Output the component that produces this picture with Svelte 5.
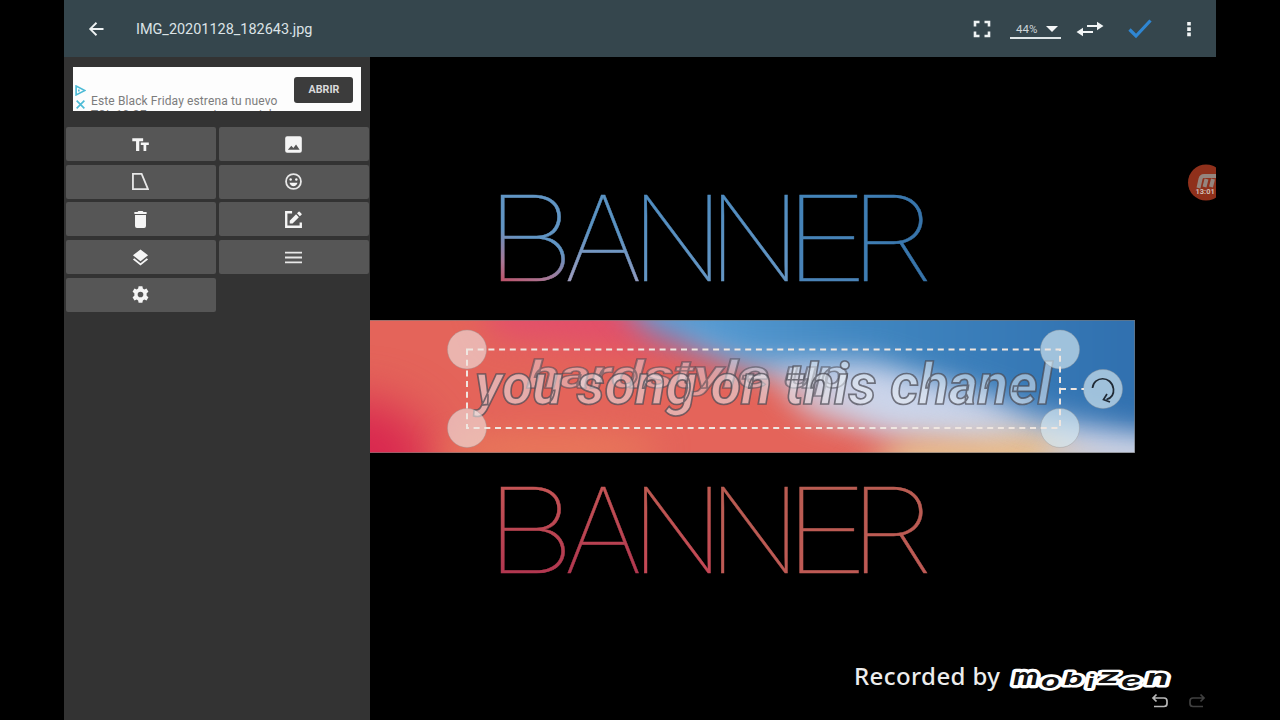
<script>
  const tools = ['text', 'image', 'shape', 'emoji', 'trash', 'edit', 'layers', 'menu', 'gear'];
  const letters = [
    { c: 'B', x: 485, w: 1.2, cool: 'cool-b', warm: 'warm-a' },
    { c: 'A', x: 563.8, w: 1.045, cool: 'cool-a', warm: 'warm-a' },
    { c: 'N', x: 630.6, w: 1.03, cool: 'cool-n', warm: 'warm-n' },
    { c: 'N', x: 707.6, w: 1.03, cool: 'cool-n', warm: 'warm-e' },
    { c: 'E', x: 783, w: 1.25, cool: 'cool-e', warm: 'warm-e' },
    { c: 'R', x: 848.6, w: 1.17, cool: 'cool-r', warm: 'warm-e' }
  ];
  const rows = [{ y: 281, tone: 'cool' }, { y: 573, tone: 'warm' }];
  const logo = [
    { c: 'm', x: 1013, y: 685, s: 23, w: 1.2 },
    { c: 'o', x: 1041, y: 688, s: 19, w: 1.6 },
    { c: 'b', x: 1064, y: 685, s: 18, w: 1.65 },
    { c: 'i', x: 1087, y: 688, s: 18, w: 1.4 },
    { c: 'z', x: 1098, y: 683, s: 20, w: 1.9 },
    { c: 'e', x: 1121, y: 688, s: 19, w: 1.8 },
    { c: 'n', x: 1146, y: 685, s: 22, w: 1.65 }
  ];
</script>

<main class="screen">
  <div class="device">
    <header>
      <svg class="back" viewBox="0 0 24 24"><path d="M21 10.800H7.800l5.600-5.400L11.800 3.600l-8.300 8.400 8.300 8.400 1.600-1.800-5.600-5.400H21z" /></svg>
      <h1>IMG_20201128_182643.jpg</h1>
      <svg class="full" viewBox="0 0 18 18"><path d="M2 6.500V2h4.500M11.500 2H16v4.500M16 11.500V16h-4.500M6.500 16H2v-4.500" /></svg>
      <div class="zoom"><span>44%</span><i></i></div>
      <svg class="swap" viewBox="0 0 28 16"><path d="M11 4h10V.8l6.500 4.200L21 9.200V6H11zM17 10H7V6.800L.5 11 7 15.200V12h10z" /></svg>
      <svg class="check" viewBox="0 0 24 20"><path d="M1.500 10.500l6.500 6.500L22.500 1.500" /></svg>
      <svg class="more" viewBox="0 0 4 16"><path d="M.2 1h3.600v3.600H.2zM.2 6.300h3.600v3.600H.2zM.2 11.600h3.600v3.600H.2z" /></svg>
    </header>

    <div class="body">
      <aside>
        <div class="ad">
          <div class="marks">
            <svg viewBox="0 0 10 10"><path d="M1 1l8 4-8 4zM3.500 4v2" /></svg>
            <svg viewBox="0 0 10 10"><path d="M1.500 1.500l7 7M8.500 1.500l-7 7" /></svg>
          </div>
          <p>Este Black Friday estrena tu nuevo<br />TCL 10 SE con un precio especial</p>
          <button>ABRIR</button>
        </div>
        <div class="tools">
          {#each tools as t}
            <button class="tool" aria-label={t}>
              <svg viewBox="0 0 18 18">
                {#if t === 'text'}
                  <path d="M.3 2.300h11.500v3.200H7.700v10.300H4.300V5.500h-4zM9.300 6.800h8.500v2.800h-2.700v6.200h-2.900V9.600H9.300z" />
                {:else if t === 'image'}
                  <path fill-rule="evenodd" d="M2.300.2h13.400a2.100 2.100 0 0 1 2.100 2.100v13.400a2.100 2.100 0 0 1-2.100 2.100H2.300a2.100 2.100 0 0 1-2.100-2.100V2.300A2.100 2.100 0 0 1 2.300.2zM3 14.500h12.500l-3.800-5.500-2.800 3.800-2.200-2.600z" />
                {:else if t === 'shape'}
                  <path class="line" d="M1 1h9.200l6.700 16H1z" />
                {:else if t === 'emoji'}
                  <circle class="line" cx="9" cy="9" r="7.900" />
                  <circle cx="6" cy="6.800" r="1.300" /><circle cx="12" cy="6.800" r="1.300" />
                  <path d="M4.800 10.400h8.400c-.6 2.400-2.200 3.600-4.200 3.600s-3.600-1.200-4.200-3.600z" />
                {:else if t === 'trash'}
                  <path d="M2.500 1h3.300l1-1h4.400l1 1h3.300v2.200h-13zM3.200 4.200h11.600V16a2 2 0 0 1-2 2H5.200a2 2 0 0 1-2-2z" />
                {:else if t === 'edit'}
                  <path class="thick" d="M7.500 1.300H1.300v15.400h15.400v-4.500" />
                  <path d="M5 10.200v3h3l6.700-6.700-3-3zM12.700 2.500l1.700-1.700a.8.800 0 0 1 1.100 0l2 2a.8.800 0 0 1 0 1.100l-1.800 1.600z" />
                {:else if t === 'layers'}
                  <path d="M9 .5l8 6.200-8 6.300-8-6.300zM9 15l6.600-5.100 1.400 1.100-8 6.500-8-6.500 1.400-1.100z" />
                {:else if t === 'menu'}
                  <path class="line" d="M0 3.800h18M0 9h18M0 14.200h18" />
                {:else}
                  <path fill-rule="evenodd" d="M7 .2h4l.5 2.500 1.500.9 2.400-.9 2 3.400-1.900 1.700v2.400l1.900 1.700-2 3.400-2.400-.9-1.500.9-.5 2.500H7l-.5-2.500-1.500-.9-2.400.9-2-3.400 1.900-1.700V7.800L.6 6.100l2-3.400 2.400.9 1.500-.9zM9 6a3 3 0 1 0 0 6 3 3 0 0 0 0-6z" />
                {/if}
              </svg>
            </button>
          {/each}
        </div>
      </aside>

      <svg class="canvas" viewBox="370 57 846 663">
        <defs>
          <linearGradient id="cool-b" gradientUnits="userSpaceOnUse" x1="20" y1="6" x2="42" y2="-40">
            <stop offset="0" stop-color="#c04c62" /><stop offset=".4" stop-color="#a97896" /><stop offset="1" stop-color="#6195c4" />
          </linearGradient>
          <linearGradient id="cool-a" gradientUnits="userSpaceOnUse" x1="0" y1="0" x2="10" y2="-55">
            <stop offset="0" stop-color="#9f9dbe" /><stop offset="1" stop-color="#5a93c3" />
          </linearGradient>
          <linearGradient id="cool-n" gradientUnits="userSpaceOnUse" x1="0" y1="0" x2="0" y2="-86">
            <stop offset="0" stop-color="#6596c4" /><stop offset="1" stop-color="#4f8cc0" />
          </linearGradient>
          <linearGradient id="cool-e" gradientUnits="userSpaceOnUse" x1="0" y1="0" x2="0" y2="-86">
            <stop offset="0" stop-color="#4a83b7" /><stop offset="1" stop-color="#4383b8" />
          </linearGradient>
          <linearGradient id="cool-r" gradientUnits="userSpaceOnUse" x1="10" y1="0" x2="70" y2="0">
            <stop offset="0" stop-color="#407fb5" /><stop offset="1" stop-color="#3672a8" />
          </linearGradient>
          <linearGradient id="warm-a" gradientUnits="userSpaceOnUse" x1="0" y1="0" x2="0" y2="-86">
            <stop offset="0" stop-color="#b23750" /><stop offset="1" stop-color="#c45455" />
          </linearGradient>
          <linearGradient id="warm-n" gradientUnits="userSpaceOnUse" x1="0" y1="0" x2="0" y2="-86">
            <stop offset="0" stop-color="#c54756" /><stop offset="1" stop-color="#bd5a51" />
          </linearGradient>
          <linearGradient id="warm-e" gradientUnits="userSpaceOnUse" x1="0" y1="0" x2="0" y2="-86">
            <stop offset="0" stop-color="#bf5a55" /><stop offset="1" stop-color="#b95c52" />
          </linearGradient>
          <clipPath id="frame"><rect x="370" y="320" width="765" height="133" /></clipPath>
          <filter id="b12" x="-50%" y="-60%" width="200%" height="220%" color-interpolation-filters="sRGB"><feGaussianBlur stdDeviation="15" /></filter>
          <filter id="b22" x="-60%" y="-60%" width="220%" height="220%" color-interpolation-filters="sRGB"><feGaussianBlur stdDeviation="24" /></filter>
          <linearGradient id="sky" gradientUnits="userSpaceOnUse" x1="640" y1="0" x2="1135" y2="0">
            <stop offset="0" stop-color="#5fa2d8" /><stop offset=".45" stop-color="#4086c0" /><stop offset="1" stop-color="#3070af" />
          </linearGradient>
        </defs>

        {#each rows as r}
          <g class="banner">
            {#each letters as l}<text transform="translate({l.x} {r.y}) scale({l.w} 1)" fill="url(#{l[r.tone]})" stroke="url(#{l[r.tone]})">{l.c}</text>{/each}
          </g>
        {/each}

        <g clip-path="url(#frame)">
          <rect x="370" y="320" width="765" height="133" fill="#e4645a" />
          <ellipse cx="355" cy="458" rx="75" ry="58" fill="#d9284f" filter="url(#b22)" />
          <path d="M475 280h190l80 80-110-8-140-15z" fill="#e2506a" filter="url(#b12)" />
          <ellipse cx="550" cy="450" rx="110" ry="18" fill="#e8785a" filter="url(#b12)" />
          <path d="M690 330l120 65 80 36 300 60V300H690z" fill="#c9d0e8" filter="url(#b12)" />
          <path d="M850 485l55-48 140 -6 70 54z" fill="#e8bf8c" filter="url(#b12)" />
          <path d="M590 260l60 72 95 32 125 -2 110 34 60 22 140 24V260z" fill="url(#sky)" filter="url(#b12)" />
          <path d="M780 384l100 -2 90 20 50 26-140 2-70-14z" fill="#ccd8ec" opacity=".75" filter="url(#b12)" />
          <path d="M1030 490l25-42 120 0v45z" fill="#c9d3e2" filter="url(#b12)" />
        </g>
        <path d="M370 320.500h765M1134.500 320v133M370 452.500h765" stroke="#777" stroke-opacity=".6" fill="none" />

        <g class="lyrics">
          <text class="under" x="527" y="388" font-size="39" textLength="322" lengthAdjust="spacingAndGlyphs">hardstyle up</text>
          <text x="475" y="404" font-size="58" textLength="577" lengthAdjust="spacingAndGlyphs">you song on this chanel</text>
        </g>

        <g fill="#f0eeec" fill-opacity=".58" stroke="#999" stroke-opacity=".4">
          <circle cx="467" cy="349.500" r="19.500" />
          <circle cx="467" cy="428" r="19.500" />
        </g>
        <g fill="#d8eaf2" fill-opacity=".66" stroke="#999" stroke-opacity=".4">
          <circle cx="1060" cy="349.500" r="19.500" />
          <circle cx="1060" cy="428" r="19.500" />
          <circle cx="1103" cy="389" r="19.500" />
        </g>
        <path d="M467 349.500h593v78.500H467zM1060 389h24" fill="none" stroke="#efe6e0" stroke-width="2" stroke-dasharray="6 4.700" />
        <path d="M1092.500 388c1-12 19-13 21 1 .5 5-2 9-7 10.500M1107 394l-3.500 5.500 6.500 2.500" fill="none" stroke="#202a35" stroke-width="1.700" />

        <text class="credit" x="854" y="685" textLength="146">Recorded by</text>
        <g class="logo">
          {#each logo as l}<text transform="translate({l.x} {l.y}) scale({l.w} 1)" font-size={l.s}>{l.c}</text>{/each}
        </g>
        <path d="M1153 698h11q3 0 3 3v2.500q0 3-3 3h-10M1156.500 694.500l-3.500 3.500 3.500 3.500" fill="none" stroke="#b8b8b8" stroke-width="1.700" />
        <path d="M1204 698h-11q-3 0-3 3v2.500q0 3 3 3h10M1200.500 694.500l3.500 3.500-3.500 3.500" fill="none" stroke="#404040" stroke-width="1.700" />

        <circle cx="1206" cy="182.500" r="18" fill="#8f301b" />
        <path d="M1198.500 188l2-9q.7-3 3.500-3h12M1204.500 187l2-8M1211 187l2-8" fill="none" stroke="#94857e" stroke-width="4" />
        <text x="1195.500" y="193.500" class="time">13:01</text>
      </svg>
    </div>
  </div>
</main>

<style>
  :global(body) { margin: 0; background: #000; }
  .screen { width: 1280px; height: 720px; display: flex; justify-content: center; background: #000; overflow: hidden; }
  .device { width: 1152px; height: 720px; display: flex; flex-direction: column; font-family: Roboto, sans-serif; }
  header { height: 57px; box-sizing: border-box; background: #35464d; display: flex; align-items: center; padding-left: 22px; flex: none; }
  .back { width: 20px; height: 20px; fill: #eef2f3; margin-top: 1px; }
  h1 { margin: 1px 0 0 30px; width: 837px; font-size: 14.450px; font-weight: 400; color: #dce3e6; }
  .full { width: 18px; height: 18px; fill: none; stroke: #eef2f3; stroke-width: 2.600; margin-top: 1px; }
  .zoom { width: 51px; height: 22px; box-sizing: border-box; border-bottom: 2px solid #dfe6e8; margin: -2px 0 0 19px; padding: 5px 3px 0 6px; display: flex; align-items: center; justify-content: space-between; color: #cdd5d8; font-size: 11.500px; }
  .zoom i { border: 6px solid transparent; border-top-color: #f4f6f7; border-bottom: 0; }
  .swap { width: 28px; height: 16px; fill: #f2f5f6; margin: 1px 0 0 15px; }
  .check { width: 24px; height: 20px; fill: none; stroke: #2f86d2; stroke-width: 3.200; margin: 1px 0 0 24px; }
  .more { width: 4px; height: 16px; fill: #f2f5f6; margin: 1px 0 0 35px; }
  .body { display: flex; flex: 1; }
  aside { width: 306px; background: #333; box-sizing: border-box; padding-top: 10px; }
  .ad { width: 288px; height: 44px; margin-left: 9px; background: #fdfdfd; display: flex; overflow: hidden; box-sizing: border-box; }
  .marks { width: 18px; display: flex; flex-direction: column; gap: 3px; padding: 18px 0 0 2px; box-sizing: border-box; }
  .marks svg { width: 11px; height: 11px; fill: none; stroke: #4dbbd6; stroke-width: 1.500; flex: none; }
  .ad p { margin: 27px 0 0; width: 203px; white-space: nowrap; font-size: 12px; line-height: 14px; color: #7c7c7c; letter-spacing: .12px; }
  .ad button { width: 59px; height: 26px; margin-top: 10px; border: 0; border-radius: 3px; background: #3c3c3c; color: #dadada; font: 700 10.700px Roboto, sans-serif; padding: 0 0 2px 1px; }
  .tools { display: grid; grid-template-columns: 150px 150px; grid-auto-rows: 34px; gap: 3.700px 3px; padding: 16px 0 0 1.500px; }
  .tool { border: 0; padding: 0; border-radius: 2px; background: #565656; display: flex; align-items: center; justify-content: center; }
  .tool svg { width: 17px; height: 17px; fill: #f5f5f5; }
  .tool .line { fill: none; stroke: #e8e8e8; stroke-width: 1.900; }
  .tool .thick { fill: none; stroke: #f5f5f5; stroke-width: 2.500; }
  .canvas { width: 846px; height: 663px; display: block; flex: none; }
  .banner { font-family: Inter, sans-serif; font-weight: 100; font-size: 118px; stroke-width: .4; }
  .lyrics { font-family: Roboto, sans-serif; font-weight: 700; font-style: italic; fill: #e8edf3; fill-opacity: .52; stroke: #464650; stroke-opacity: .7; stroke-width: 1.700; }
  .lyrics .under { stroke-opacity: .55; stroke-width: 1.400; fill-opacity: .42; }
  .credit { font-family: "Noto Sans", sans-serif; font-size: 24px; font-weight: 500; fill: #ededed; }
  .logo { font-family: Inter, sans-serif; font-weight: 700; font-style: italic; fill: #111; }
  .logo text { stroke: #fff; stroke-width: 7; stroke-linejoin: round; vector-effect: non-scaling-stroke; paint-order: stroke; }
  .time { font: 700 7.500px Roboto, sans-serif; fill: #d0bfb8; }
</style>
